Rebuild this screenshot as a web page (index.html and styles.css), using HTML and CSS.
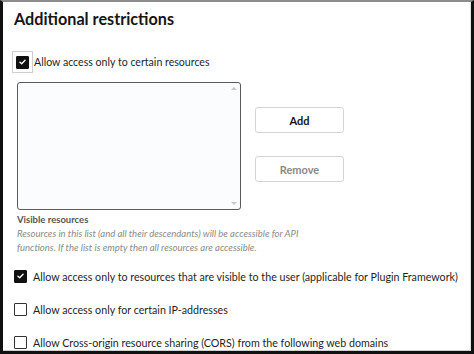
FILE: index.html
```html
<!DOCTYPE html>
<html>
<head>
<meta charset="utf-8">
<link rel="stylesheet" href="styles.css">
</head>
<body>
<div class="frame">
  <div class="panel">
    <h2 class="title">Additional restrictions</h2>
    <label class="check-row first">
      <span class="focus-ring"><span class="box checked"><svg viewBox="0 0 12 12" width="12" height="12"><path d="M3.2 6.3 L5.1 8 L8.8 4.2" fill="none" stroke="#fff" stroke-width="1.5" stroke-linecap="round" stroke-linejoin="round"/></svg></span></span>
      <span class="label">Allow access only to certain resources</span>
    </label>
    <div class="resources">
      <div class="list-area">
        <div class="list-box">
          <span class="scroll-up"></span>
          <span class="scroll-down"></span>
        </div>
        <div class="list-title">Visible resources</div>
        <div class="list-help">Resources in this list (and all their descendants) will be accessible for API<br>functions. If the list is empty then all resources are accessible.</div>
      </div>
      <div class="buttons">
        <button class="btn">Add</button>
        <button class="btn disabled">Remove</button>
      </div>
    </div>
    <label class="check-row lower">
      <span class="box checked"><svg viewBox="0 0 12 12" width="12" height="12"><path d="M3.2 6.3 L5.1 8 L8.8 4.2" fill="none" stroke="#fff" stroke-width="1.5" stroke-linecap="round" stroke-linejoin="round"/></svg></span>
      <span class="label">Allow access only to resources that are visible to the user (applicable for Plugin Framework)</span>
    </label>
    <label class="check-row">
      <span class="box"></span>
      <span class="label">Allow access only for certain IP-addresses</span>
    </label>
    <label class="check-row">
      <span class="box"></span>
      <span class="label">Allow Cross-origin resource sharing (CORS) from the following web domains</span>
    </label>
  </div>
</div>
</body>
</html>
```
FILE: styles.css
```css
* { box-sizing: border-box; }
html, body { margin: 0; padding: 0; background: #fff; }
body { font-family: Lato, "Noto Sans", sans-serif; color: #161513; }

.frame {
  width: 474px;
  height: 354px;
  border-left: 3px solid #111;
  border-right: 3px solid #111;
  border-bottom: 3px solid #111;
  border-top: 2px solid #8c8c8c;
  overflow: hidden;
}
.panel {
  height: 100%;
  border-right: 1px solid #e4e4e4;
  border-bottom: 1px solid #cfcfcf;
  padding: 0 0 0 11px;
  display: flex;
  flex-direction: column;
  overflow: hidden;
}
.panel > * { flex: none; }
.title {
  margin: 4px 0 0 0;
  font-size: 16.2px;
  font-weight: 700;
  line-height: 26px;
}
.check-row {
  display: flex;
  align-items: center;
  gap: 6px;
  height: 20px;
  font-size: 10.7px;
}
.check-row.first { margin-top: 19px; height: 22px; gap: 1px; font-size: 10.6px; }
.check-row + .check-row { margin-top: 13px; }
.check-row.lower { margin-top: 11px; }
.focus-ring {
  display: flex;
  align-items: center;
  justify-content: center;
  width: 21px;
  height: 22px;
  margin-left: -2px;
  border: 1px solid #cfcfcf;
}
.box {
  width: 13px;
  height: 13px;
  border: 1.5px solid #333;
  border-radius: 1px;
  display: flex;
  align-items: center;
  justify-content: center;
  flex: none;
}
.box.checked { background: #111; border-color: #111; }
.box svg { display: block; }
.label { color: #1f1f1f; white-space: nowrap; }

.resources {
  display: flex;
  margin-top: 9px;
  margin-left: 3px;
}
.list-area { width: 252px; }
.list-box {
  position: relative;
  width: 224px;
  height: 128px;
  border: 1.5px solid #5a5a5a;
  border-radius: 3px;
  background: #fbfcfd;
}
.scroll-up, .scroll-down {
  position: absolute;
  right: 3px;
  width: 0; height: 0;
  border-left: 3px solid transparent;
  border-right: 3px solid transparent;
}
.scroll-up { top: 4px; border-bottom: 3px solid #c8c8c8; }
.scroll-down { bottom: 4px; border-top: 3px solid #c8c8c8; }
.list-title {
  margin-top: 3px;
  font-size: 9.5px;
  font-weight: 700;
  color: #565656;
  line-height: 14px;
}
.list-help {
  font-size: 9.5px;
  font-style: italic;
  color: #8a8a8a;
  line-height: 14px;
  white-space: nowrap;
}
.buttons {
  display: flex;
  flex-direction: column;
  gap: 23px;
  margin-top: 25px;
  margin-left: -14px;
}
.btn {
  width: 89px;
  height: 26px;
  background: #fff;
  border: 1px solid #d4d4d4;
  border-radius: 3px;
  font-family: Lato, "Noto Sans", sans-serif;
  font-size: 11px;
  font-weight: 700;
  color: #161513;
  padding: 0;
}
.btn.disabled { color: #8a8a8a; }
```
